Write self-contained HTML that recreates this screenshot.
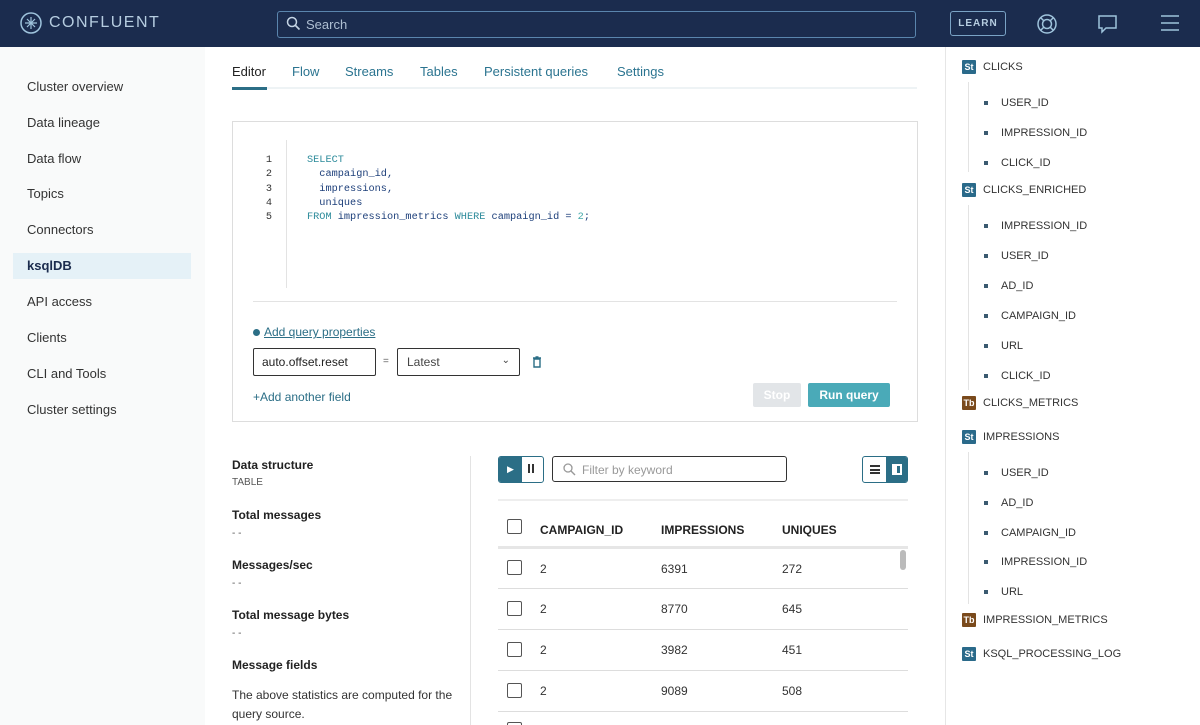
<!DOCTYPE html>
<html style="width:1200px;height:725px;overflow:hidden"><head><meta charset="utf-8"><style>
*{box-sizing:border-box;margin:0;padding:0}
body{width:1200px;height:725px;overflow:hidden;font-family:"Liberation Sans",sans-serif;background:#fff;position:relative;color:#222}
.hdr{position:absolute;left:0;top:0;width:1200px;height:47px;background:#1b2c4e}
.abs{position:absolute}
.side{position:absolute;left:0;top:47px;width:205px;height:678px;background:#f9fafa}
.side div{position:absolute;left:13px;width:178px;height:26px;padding-left:14px;font-size:13px;line-height:26px;color:#333}
.tabs span{position:absolute;top:64px;font-size:13px;color:#2b7490}
.mono{font-family:"Liberation Mono",monospace;font-size:10.25px;color:#1d3f7a;line-height:14.3px}
.tree div{position:absolute;font-size:11px;color:#333}
.badge{display:inline-block;width:14px;height:14px;color:#fff;font-size:9px;font-weight:bold;text-align:center;line-height:14px;margin-right:7px;vertical-align:middle;border-radius:1px}
.st{background:#2a6a8a}.tb{background:#7a4a1c}
.dot{display:inline-block;width:4px;height:4px;background:#3a5a70;margin-right:13px;vertical-align:middle}
.lbl{position:absolute;left:232px;font-size:12px;font-weight:bold;color:#222}
.sub{position:absolute;left:232px;font-size:10px;color:#555}
.cb{position:absolute;width:15px;height:15px;border:1.5px solid #555;border-radius:2px;background:#fff}
.td{position:absolute;font-size:12px;color:#333}
.hl{position:absolute;left:498px;width:410px;height:1px;background:#ddd}
</style></head><body>
<div class="hdr">
<svg class="abs" style="left:20px;top:12px" width="22" height="22" viewBox="0 0 22 22"><circle cx="11" cy="11" r="10" fill="none" stroke="#9ec3dc" stroke-width="1.5"/><path d="M11 5v12M5 11h12M7 7l8 8M15 7l-8 8" stroke="#9ec3dc" stroke-width="1.2"/></svg>
<div class="abs" style="left:49px;top:14px;color:#b6cde0;font-size:16px;letter-spacing:1.5px">CONFLUENT</div>
<div class="abs" style="left:277px;top:11px;width:639px;height:27px;border:1px solid #5a85ad;border-radius:3px"></div>
<svg class="abs" style="left:286px;top:16px" width="15" height="15" viewBox="0 0 15 15"><circle cx="6" cy="6" r="4.5" fill="none" stroke="#c5d5e5" stroke-width="1.5"/><path d="M9.5 9.5l4 4" stroke="#c5d5e5" stroke-width="1.6"/></svg>
<div class="abs" style="left:306px;top:17px;color:#aebfd2;font-size:13px">Search</div>
<div class="abs" style="left:950px;top:11px;width:56px;height:25px;border:1px solid #7aa3c5;border-radius:3px;color:#b6cde0;font-size:10px;font-weight:bold;letter-spacing:1px;text-align:center;line-height:23px">LEARN</div>
<svg class="abs" style="left:1036px;top:13px" width="22" height="22" viewBox="0 0 22 22"><circle cx="11" cy="11" r="9" fill="none" stroke="#9ec3dc" stroke-width="1.5"/><circle cx="11" cy="11" r="4.5" fill="none" stroke="#9ec3dc" stroke-width="1.5"/><path d="M4.5 4.5l3.5 3.5M17.5 4.5L14 8M4.5 17.5L8 14M17.5 17.5L14 14" stroke="#9ec3dc" stroke-width="1.5"/></svg>
<svg class="abs" style="left:1097px;top:14px" width="22" height="20" viewBox="0 0 22 20"><path d="M2 2h17v12H9l-4 4v-4H2z" fill="none" stroke="#9ec3dc" stroke-width="1.5"/></svg>
<svg class="abs" style="left:1160px;top:14px" width="20" height="18" viewBox="0 0 20 18"><path d="M1 2h18M1 9h18M1 16h18" stroke="#9ec3dc" stroke-width="1.5"/></svg>
</div>
<div class="side">
<div style="top:27px">Cluster overview</div><div style="top:63px">Data lineage</div><div style="top:99px">Data flow</div><div style="top:134px">Topics</div><div style="top:170px">Connectors</div><div style="top:206px;background:#e5f1f7;font-weight:bold;color:#1b2c4e">ksqlDB</div><div style="top:242px">API access</div><div style="top:278px">Clients</div><div style="top:314px">CLI and Tools</div><div style="top:350px">Cluster settings</div>
</div>
<div class="tabs">
<span style="left:232px;color:#222">Editor</span><span style="left:292px">Flow</span><span style="left:345px">Streams</span><span style="left:420px">Tables</span><span style="left:484px">Persistent queries</span><span style="left:617px">Settings</span>
</div>
<div class="abs" style="left:232px;top:87px;width:685px;height:2px;background:#eef3f5"></div>
<div class="abs" style="left:232px;top:87px;width:35px;height:3px;background:#2b6e86"></div>
<div class="abs" style="left:232px;top:121px;width:686px;height:301px;border:1px solid #ddd"></div>
<div class="abs mono" style="left:258px;top:153px;width:14px;text-align:right;color:#333">1<br>2<br>3<br>4<br>5</div>
<div class="abs" style="left:286px;top:140px;width:1px;height:148px;background:#e3e3e3"></div>
<div class="abs mono" style="left:307px;top:153px;white-space:pre"><span style="color:#2b8a9a">SELECT</span>
  campaign_id,
  impressions,
  uniques
<span style="color:#2b8a9a">FROM</span> impression_metrics <span style="color:#2b8a9a">WHERE</span> campaign_id = <span style="color:#4aa">2</span>;</div>
<div class="abs" style="left:253px;top:301px;width:644px;height:1px;background:#e3e3e3"></div>
<div class="abs" style="left:253px;top:329px;width:7px;height:7px;border-radius:50%;background:#2b6e86"></div>
<div class="abs" style="left:264px;top:325px;font-size:12px;color:#2b6e86;text-decoration:underline">Add query properties</div>
<div class="abs" style="left:253px;top:348px;width:123px;height:28px;border:1px solid #333;border-radius:2px;font-size:12px;line-height:26px;padding-left:8px">auto.offset.reset</div>
<div class="abs" style="left:383px;top:356px;font-size:10px;color:#666">=</div>
<div class="abs" style="left:397px;top:348px;width:123px;height:28px;border:1px solid #333;border-radius:2px;font-size:12px;line-height:26px;padding-left:9px;color:#444">Latest<span style="position:absolute;right:9px;top:-1px;font-size:10px">&#8964;</span></div>
<svg class="abs" style="left:532px;top:356px" width="10" height="12" viewBox="0 0 10 12"><path d="M1 2h8M3.5 1h3M2 3h6v8H2z" fill="none" stroke="#2b6e86" stroke-width="1.4"/></svg>
<div class="abs" style="left:253px;top:390px;font-size:12px;color:#2b6e86">+Add another field</div>
<div class="abs" style="left:753px;top:383px;width:48px;height:24px;background:#e2e5e8;border-radius:2px;color:#fff;font-size:12px;font-weight:bold;text-align:center;line-height:24px">Stop</div>
<div class="abs" style="left:808px;top:383px;width:82px;height:24px;background:#4aaab8;border-radius:2px;color:#fff;font-size:12px;font-weight:bold;text-align:center;line-height:24px">Run query</div>
<div class="lbl" style="top:458px">Data structure</div><div class="sub" style="top:477px">TABLE</div>
<div class="lbl" style="top:508px">Total messages</div><div class="sub" style="top:528px">- -</div>
<div class="lbl" style="top:558px">Messages/sec</div><div class="sub" style="top:578px">- -</div>
<div class="lbl" style="top:608px">Total message bytes</div><div class="sub" style="top:628px">- -</div>
<div class="lbl" style="top:658px">Message fields</div>
<div class="abs" style="left:232px;top:686px;font-size:12px;color:#333;line-height:19px;width:240px">The above statistics are computed for the query source.</div>
<div class="abs" style="left:470px;top:456px;width:1px;height:269px;background:#e3e3e3"></div>
<div class="abs" style="left:498px;top:456px;width:46px;height:27px;border:1px solid #2b6e86;border-radius:3px;overflow:hidden"><div style="width:23px;height:27px;background:#2b6e86;color:#fff;font-size:9px;text-align:center;line-height:25px">&#9654;</div><div style="position:absolute;left:29px;top:7px;width:2px;height:9px;background:#333;box-shadow:4px 0 0 #333"></div></div>
<div class="abs" style="left:552px;top:456px;width:235px;height:26px;border:1px solid #333;border-radius:3px"></div>
<svg class="abs" style="left:563px;top:463px" width="13" height="13" viewBox="0 0 13 13"><circle cx="5" cy="5" r="4" fill="none" stroke="#999" stroke-width="1.3"/><path d="M8 8l4 4" stroke="#999" stroke-width="1.4"/></svg>
<div class="abs" style="left:582px;top:463px;font-size:12px;color:#999">Filter by keyword</div>
<div class="abs" style="left:862px;top:456px;width:46px;height:27px;border:1px solid #2b6e86;border-radius:3px;overflow:hidden"><div style="position:absolute;left:7px;top:8px;width:10px;height:9px;border-top:2px solid #333;border-bottom:2px solid #333"></div><div style="position:absolute;left:7px;top:12px;width:10px;height:2px;background:#333"></div><div style="position:absolute;left:23px;top:0;width:23px;height:27px;background:#2b6e86"></div><div style="position:absolute;left:29px;top:7px;width:10px;height:11px;border:2px solid #fff;border-left-width:5px"></div></div>
<div class="hl" style="top:499px;height:2px;background:#eee"></div>
<div class="cb" style="left:507px;top:519px"></div>
<div class="td" style="left:540px;top:523px;font-weight:bold;color:#222">CAMPAIGN_ID</div><div class="td" style="left:661px;top:523px;font-weight:bold;color:#222">IMPRESSIONS</div><div class="td" style="left:782px;top:523px;font-weight:bold;color:#222">UNIQUES</div>
<div class="hl" style="top:546px;height:3px;background:#e6e6e6"></div>
<div class="abs" style="left:900px;top:550px;width:6px;height:20px;background:#bbb;border-radius:3px"></div>
<div class="cb" style="left:507px;top:560px"></div><div class="td" style="left:540px;top:562px">2</div><div class="td" style="left:661px;top:562px">6391</div><div class="td" style="left:782px;top:562px">272</div>
<div class="hl" style="top:588px"></div>
<div class="cb" style="left:507px;top:601px"></div><div class="td" style="left:540px;top:602px">2</div><div class="td" style="left:661px;top:602px">8770</div><div class="td" style="left:782px;top:602px">645</div>
<div class="hl" style="top:629px"></div>
<div class="cb" style="left:507px;top:642px"></div><div class="td" style="left:540px;top:643px">2</div><div class="td" style="left:661px;top:643px">3982</div><div class="td" style="left:782px;top:643px">451</div>
<div class="hl" style="top:670px"></div>
<div class="cb" style="left:507px;top:683px"></div><div class="td" style="left:540px;top:684px">2</div><div class="td" style="left:661px;top:684px">9089</div><div class="td" style="left:782px;top:684px">508</div>
<div class="hl" style="top:711px"></div>
<div class="cb" style="left:507px;top:722px"></div>
<div class="abs" style="left:945px;top:47px;width:1px;height:678px;background:#e6e6e6"></div>
<div class="abs" style="left:968px;top:82px;width:1px;height:90px;background:#e3e3e3"></div>
<div class="abs" style="left:968px;top:205px;width:1px;height:185px;background:#e3e3e3"></div>
<div class="abs" style="left:968px;top:452px;width:1px;height:152px;background:#e3e3e3"></div>
<div class="tree">
<div style="left:962px;top:60px"><span class="badge st">St</span>CLICKS</div>
<div style="left:984px;top:97px"><span class="dot"></span>USER_ID</div>
<div style="left:984px;top:127px"><span class="dot"></span>IMPRESSION_ID</div>
<div style="left:984px;top:157px"><span class="dot"></span>CLICK_ID</div>
<div style="left:962px;top:183px"><span class="badge st">St</span>CLICKS_ENRICHED</div>
<div style="left:984px;top:220px"><span class="dot"></span>IMPRESSION_ID</div>
<div style="left:984px;top:250px"><span class="dot"></span>USER_ID</div>
<div style="left:984px;top:280px"><span class="dot"></span>AD_ID</div>
<div style="left:984px;top:310px"><span class="dot"></span>CAMPAIGN_ID</div>
<div style="left:984px;top:340px"><span class="dot"></span>URL</div>
<div style="left:984px;top:370px"><span class="dot"></span>CLICK_ID</div>
<div style="left:962px;top:396px"><span class="badge tb">Tb</span>CLICKS_METRICS</div>
<div style="left:962px;top:430px"><span class="badge st">St</span>IMPRESSIONS</div>
<div style="left:984px;top:467px"><span class="dot"></span>USER_ID</div>
<div style="left:984px;top:497px"><span class="dot"></span>AD_ID</div>
<div style="left:984px;top:527px"><span class="dot"></span>CAMPAIGN_ID</div>
<div style="left:984px;top:556px"><span class="dot"></span>IMPRESSION_ID</div>
<div style="left:984px;top:586px"><span class="dot"></span>URL</div>
<div style="left:962px;top:613px"><span class="badge tb">Tb</span>IMPRESSION_METRICS</div>
<div style="left:962px;top:647px"><span class="badge st">St</span>KSQL_PROCESSING_LOG</div>
</div>
</body></html>
